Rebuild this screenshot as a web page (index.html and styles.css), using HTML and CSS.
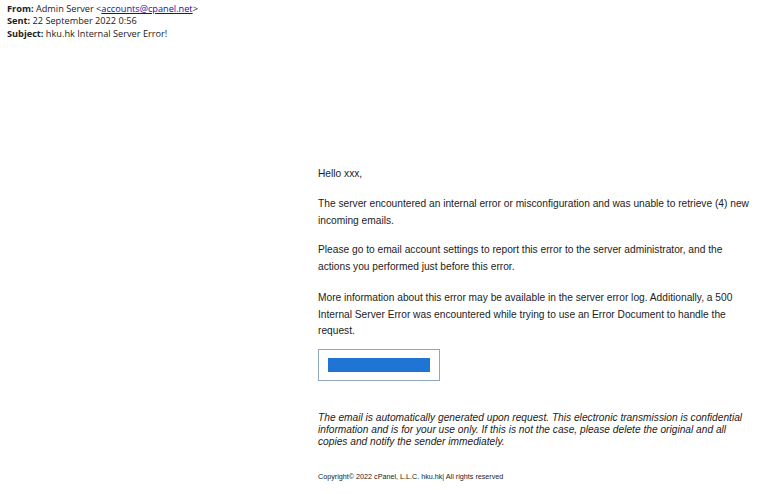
FILE: index.html
```html
<!DOCTYPE html>
<html lang="en">
<head>
  <meta charset="UTF-8">
  <title>hku.hk Internal Server Error!</title>
  <link rel="stylesheet" href="styles.css">
</head>
<body>

<!-- Message header -->
<div class="msg-header">
  <div><b>From:</b> Admin Server &lt;<a href="#">accounts@cpanel.net</a>&gt;</div>
  <div><b>Sent:</b> 22 September 2022 0:56</div>
  <div><b>Subject:</b> hku.hk Internal Server Error!</div>
</div>

<!-- Message body -->
<div class="msg-body">
  <p class="hello">Hello xxx,</p>
  <p>The server encountered an internal error or misconfiguration and was unable to retrieve (4) new incoming emails.</p>
  <p>Please go to email account settings to report this error to the server administrator, and the actions you performed just before this error.</p>
  <p class="more">More information about this error may be available in the server error log. Additionally, a 500 Internal Server Error was encountered while trying to use an Error Document to handle the request.</p>

  <div class="btn-box"><span class="btn-bar"></span></div>

  <p class="disclaimer">The email is automatically generated upon request. This electronic transmission is confidential information and is for your use only. If this is not the case, please delete the original and all copies and notify the sender immediately.</p>

  <p class="copyright">Copyright&copy; 2022 cPanel, L.L.C. hku.hk| All rights reserved</p>
</div>

</body>
</html>
```

FILE: styles.css
```css
html, body {
  margin: 0;
  padding: 0;
  background-color: #fff;
  color: #111;
}

.msg-header {
  padding: 3px 0 0 7px;
  font-family: "Open Sans", "Liberation Sans", sans-serif;
  font-size: 9.2px;
  line-height: 12.3px;
  color: #222;
}

.msg-header b {
  font-weight: 700;
}

.msg-header a {
  color: #1a0dab;
  text-decoration: underline;
}

.msg-body {
  width: 437px;
  margin: 126px 0 0 318px;
  font-family: "Liberation Sans", Arial, sans-serif;
  font-size: 10.2px;
  line-height: 16.5px;
  color: #1c1c1c;
}

.msg-body p {
  margin: 0 0 13px 0;
}

.msg-body .hello {
  margin-bottom: 14px;
}

.msg-body .more {
  margin-top: 15px;
  margin-bottom: 9px;
}

.btn-box {
  width: 102px;
  height: 14px;
  padding: 8px 9px;
  border: 1px solid #8fa6c2;
}

.btn-bar {
  display: block;
  width: 100%;
  height: 100%;
  background: #1f74d4;
}

.msg-body .disclaimer {
  margin-top: 31px;
  font-style: italic;
  line-height: 12px;
  color: #222;
}

.msg-body .copyright {
  margin-top: 24px;
  font-size: 7.2px;
  line-height: 10px;
}
```
